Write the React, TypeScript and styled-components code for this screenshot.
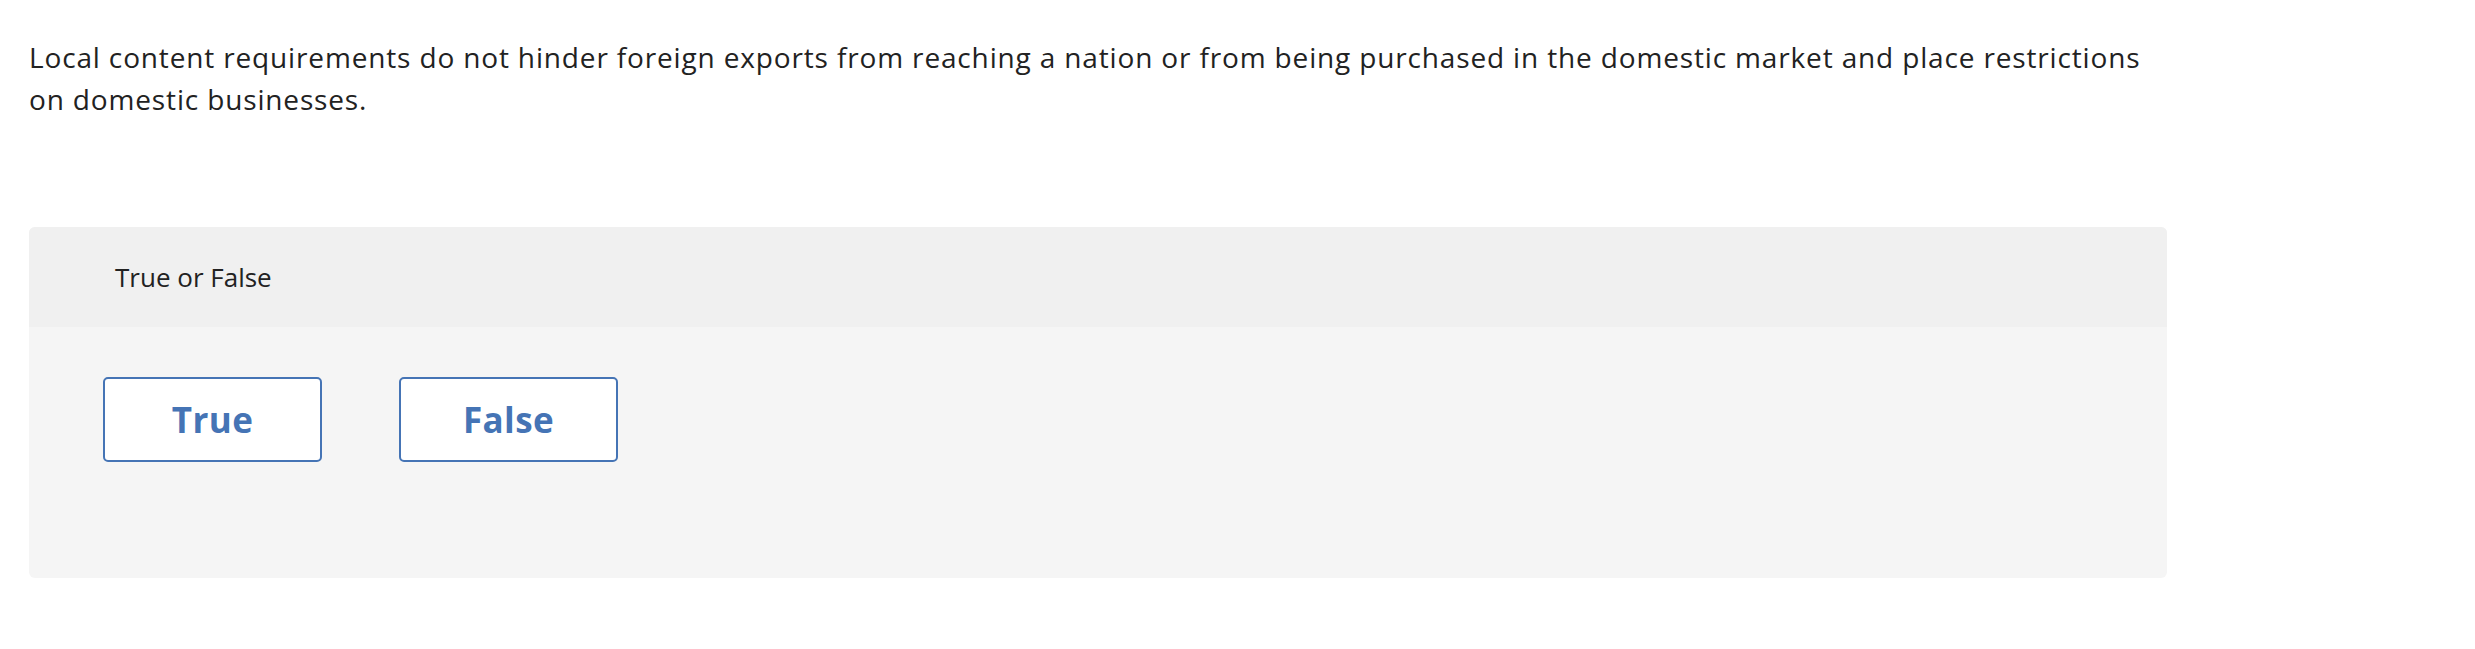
import React from "react";
import styled, { createGlobalStyle } from "styled-components";

const Global = createGlobalStyle`
  html, body { margin: 0; padding: 0; background: #ffffff; }
  body { font-family: "Open Sans", Lato, Arial, sans-serif; color: #222222; }
`;

const Page = styled.main`
  padding: 36px 0 0 29px;
  width: 2138px;
`;

const Prompt = styled.p`
  margin: 0;
  font-size: 28px;
  line-height: 42px;
  letter-spacing: 0.85px;
  color: #222222;
`;

const Panel = styled.section`
  margin-top: 107px;
  border-radius: 6px;
  overflow: hidden;
  background: #f5f5f5;
`;

const PanelHeader = styled.header`
  height: 100px;
  background: #f0f0f0;
  display: flex;
  align-items: center;
  padding-left: 86px;
  font-size: 26px;
  color: #222222;
`;

const PanelBody = styled.div`
  display: flex;
  gap: 77px;
  padding: 50px 0 116px 74px;
`;

const Choice = styled.button`
  width: 219px;
  height: 85px;
  box-sizing: border-box;
  border: 2px solid #4574b5;
  border-radius: 5px;
  background: #ffffff;
  color: #4574b5;
  font-family: "Open Sans", Lato, Arial, sans-serif;
  font-weight: 700;
  font-size: 35px;
  letter-spacing: 0.4px;
  padding: 0;
  cursor: pointer;
`;

export default function App() {
  return (
    <>
      <Global />
      <Page>
        <Prompt>
          Local content requirements do not hinder foreign exports from reaching a nation or from being
          purchased in the domestic market and place restrictions on domestic businesses.
        </Prompt>
        <Panel>
          <PanelHeader>True or False</PanelHeader>
          <PanelBody>
            <Choice>True</Choice>
            <Choice>False</Choice>
          </PanelBody>
        </Panel>
      </Page>
    </>
  );
}
